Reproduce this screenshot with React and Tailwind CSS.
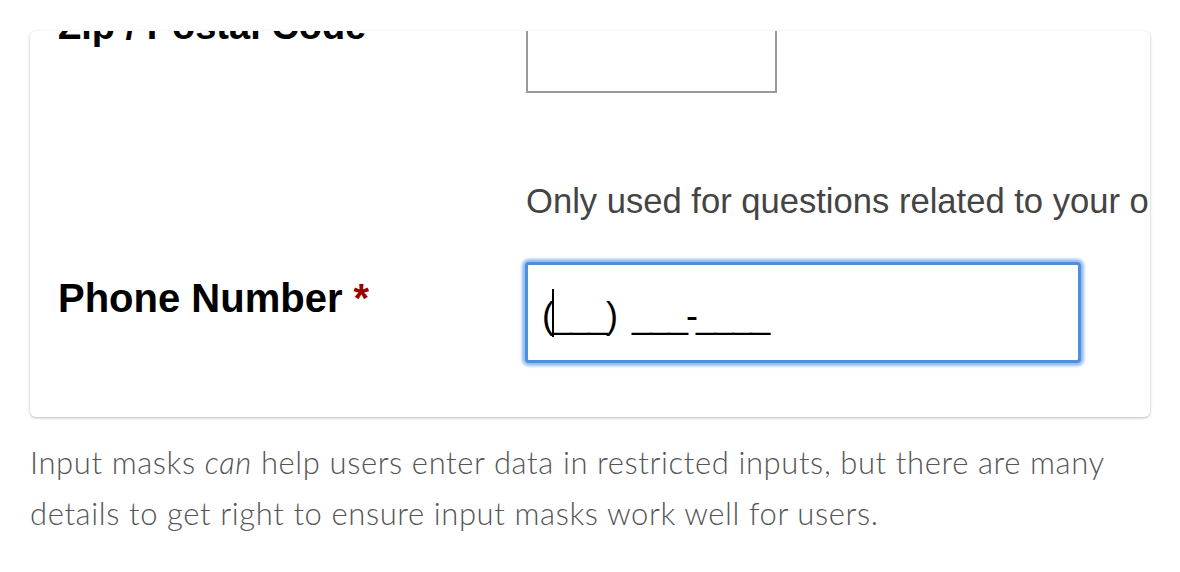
export default function App() {
  return (
    <div className="h-[572px] w-[1180px] overflow-hidden bg-white pl-[30px] pt-[31px]">
      <div className="h-[386px] w-[1120px] overflow-hidden rounded-[6px] bg-white pl-[28px] shadow-[0_1px_3px_rgba(0,0,0,0.28)] font-['Liberation_Sans',Arial,sans-serif]">
        <div className="-mt-[26px] flex items-start">
          <div className="-mt-[2px] w-[468px] shrink-0 text-[38px] font-bold leading-[46px] text-black">Zip / Postal Code</div>
          <div className="mt-[18px] h-[70px] w-[251px] border-2 border-[#999]"></div>
        </div>

        <div className="ml-[468px] mt-[88px] whitespace-nowrap text-[34.6px] leading-[40px] text-[#444]">
          Only used for questions related to your order
        </div>

        <div className="mt-[41px] flex items-start">
          <div className="mt-[13px] w-[467px] shrink-0 whitespace-nowrap text-[40px] font-bold leading-[46px] text-black">
            Phone Number <span className="text-[#990000]">*</span>
          </div>
          <div className="flex h-[101px] w-[556px] items-center rounded-[4px] border-[3px] border-[#4f90de] bg-white pb-[10px] pl-[14px] shadow-[0_0_3px_3px_rgba(120,170,235,0.8)]">
            <div className="whitespace-pre text-[36px] leading-[40px] tracking-[-2px] text-black">
              (<span className="-mr-[2px] inline-block h-[48px] w-[2px] translate-y-[9px] bg-black align-baseline"></span>___)  ___-____
            </div>
          </div>
        </div>
      </div>

      <p className="mt-[20px] w-[1120px] font-['Lato',sans-serif] text-[31px] font-light leading-[51px] tracking-[0.6px] text-[#555]">
        Input masks <em>can</em> help users enter data in restricted inputs, but there are many details to get right to ensure input masks work well for users.
      </p>
    </div>
  );
}
